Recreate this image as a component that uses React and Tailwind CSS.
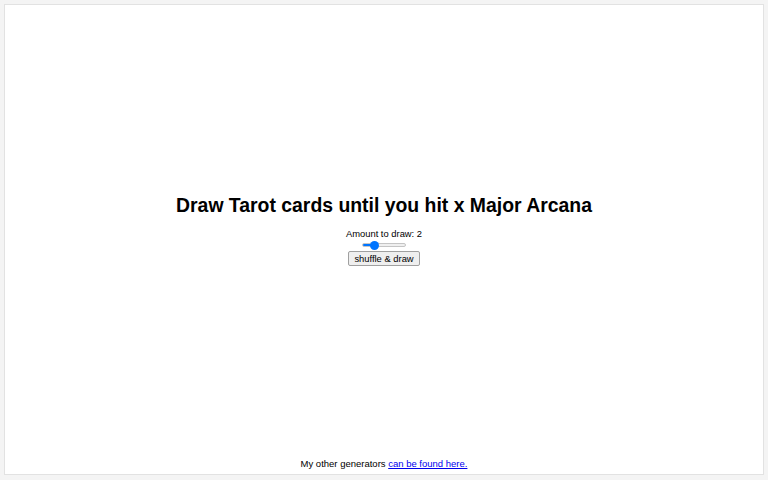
import React, { useState } from "react";

export default function App() {
  const [amount, setAmount] = useState(2);
  const pct = ((amount - 1) / 5) * 100;
  return (
    <div className="w-[768px] h-[480px] bg-[#f4f4f4] p-[4px] font-['Liberation_Sans',Arial,sans-serif] text-black">
      <div className="h-[471px] w-[760px] bg-white border border-[#e2e2e2] flex flex-col items-center">
        <div className="flex-1 flex flex-col items-center justify-center pb-[4px]">
          <h1 className="text-[19.4px] font-bold leading-[24px] m-0">
            Draw Tarot cards until you hit x Major Arcana
          </h1>
          <div className="mt-[11px] text-[9.4px] leading-[11px]">Amount to draw: {amount}</div>
          <input
            type="range"
            min={1}
            max={6}
            value={amount}
            onChange={(e) => setAmount(Number(e.target.value))}
            style={{ background: `linear-gradient(to right, #0075ff ${pct}%, #efefef ${pct}%)` }}
            className="appearance-none w-[44px] h-[4px] mt-[4px] mb-[3px] rounded-full border border-[#c4c4c4] [&::-webkit-slider-thumb]:appearance-none [&::-webkit-slider-thumb]:w-[9px] [&::-webkit-slider-thumb]:h-[9px] [&::-webkit-slider-thumb]:rounded-full [&::-webkit-slider-thumb]:bg-[#0075ff]"
          />
          <button className="mt-[1px] text-[9.4px] leading-[11px] px-[5px] py-[1px] bg-[#efefef] border border-[#a0a0a0] rounded-[2px] text-black">
            shuffle &amp; draw
          </button>
        </div>
        <div className="text-[9.5px] leading-[11px] pb-[5px]">
          My other generators{" "}
          <a href="#" className="text-[#0000ee] underline">
            can be found here.
          </a>
        </div>
      </div>
    </div>
  );
}
